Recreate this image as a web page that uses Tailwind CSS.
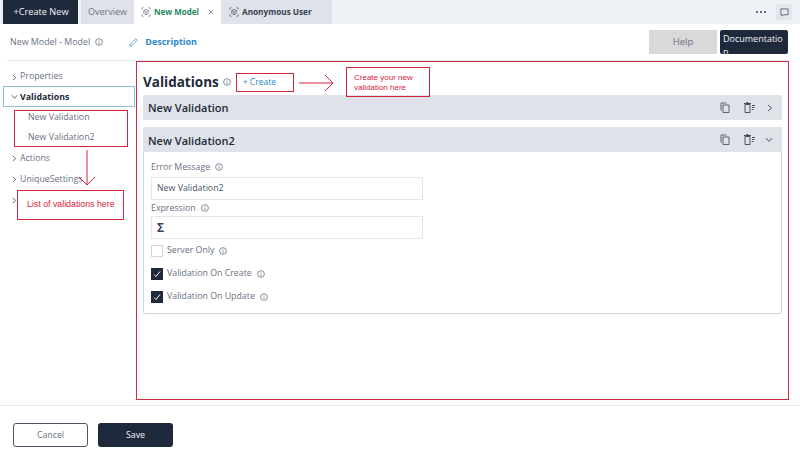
<!DOCTYPE html>
<html lang="en">
<head>
<meta charset="UTF-8">
<title>New Model</title>
<script src="https://cdn.jsdelivr.net/npm/@tailwindcss/browser@4"></script>
</head>
<body class="relative w-[800px] h-[463px] overflow-hidden bg-white font-['Open_Sans',sans-serif] text-[8.8px] text-gray-500">

<!-- tabs -->
<div class="flex h-6 bg-[#eef1f5] pl-[3px]">
  <div class="w-[75px] flex items-center justify-center pl-[1px] bg-[#1e293b] text-[9.2px] text-gray-100">+Create New</div>
  <div class="ml-[3px] w-[53px] flex items-center justify-center bg-[#dfe3e9] text-[9px] text-gray-500">Overview</div>
  <div class="w-[87px] flex items-center pl-[7px] bg-white">
    <svg class="w-[10px] h-[10px] text-gray-500 mr-[3px]" viewBox="0 0 12 12" fill="none" stroke="currentColor" stroke-width=".8"><path d="M1 3V1h2M9 1h2v2M11 9v2H9M3 11H1V9"/><circle cx="6" cy="6" r="3"/><path d="M3 4l3 2 3-2M6 6v3"/></svg>
    <span class="text-[8px] font-bold text-[#1f8a5f]">New Model</span>
    <svg class="w-[6px] h-[6px] ml-[9px] text-gray-500" viewBox="0 0 8 8" stroke="currentColor" stroke-width="1"><path d="M1 1l6 6M7 1L1 7"/></svg>
  </div>
  <div class="w-[111px] flex items-center pl-[8px] bg-[#dfe3e9]">
    <svg class="w-[10px] h-[10px] text-gray-600 mr-[3px]" viewBox="0 0 12 12" fill="none" stroke="currentColor" stroke-width=".8"><path d="M1 3V1h2M9 1h2v2M11 9v2H9M3 11H1V9"/><circle cx="6" cy="6" r="3"/><path d="M3 4l3 2 3-2M6 6v3"/></svg>
    <span class="text-[8.2px] font-bold text-gray-700">Anonymous User</span>
  </div>
  <div class="ml-auto flex items-center pr-[8px]">
    <div class="flex gap-[1.5px] mr-[10px]">
      <span class="w-[2.5px] h-[2.5px] rounded-full bg-gray-700"></span>
      <span class="w-[2.5px] h-[2.5px] rounded-full bg-gray-700"></span>
      <span class="w-[2.5px] h-[2.5px] rounded-full bg-gray-700"></span>
    </div>
    <div class="w-4 h-4 flex items-center justify-center bg-[#e2e6ec]">
      <svg class="w-[9px] h-[9px] text-gray-600" viewBox="0 0 10 10" fill="none" stroke="currentColor" stroke-width=".9"><path d="M1 1h8v6.500H3.500L2 9V7.500H1z"/></svg>
    </div>
  </div>
</div>

<!-- model header -->
<div class="flex items-center h-[37px] ml-[7px] mr-[12px] pl-[3px] border-b border-gray-200">
  <span class="text-[8.9px] text-gray-500">New Model - Model</span>
  <svg class="w-2 h-2 ml-[5px] text-gray-500" viewBox="0 0 10 10" fill="none" stroke="currentColor"><circle cx="5" cy="5" r="4.200"/><path d="M5 4.500v3M5 2.500v1"/></svg>
  <svg class="w-[9px] h-[9px] ml-[26px] text-[#2b88c8]" viewBox="0 0 10 10" fill="none" stroke="currentColor" stroke-width=".8"><path d="M1 9l.6-2.500L7.500 .800l1.700 1.700-5.900 5.900z"/></svg>
  <span class="ml-[7px] text-[9px] font-bold text-[#2b88c8]">Description</span>
  <div class="ml-auto w-[68px] h-6 flex items-center justify-center bg-[#d9d9d9] text-[9.5px] text-gray-500">Help</div>
  <div class="ml-[3px] w-[68px] h-6 overflow-hidden rounded-[2px] bg-[#1e293b] pl-[3px] pt-[2px] text-[9px] leading-[13px] break-all text-gray-100">Documentation</div>
</div>

<!-- content -->
<div class="flex h-[344px]">
  <div class="w-[136px] pl-[3px] pr-[1px] pt-[7px] shrink-0">
    <div class="flex items-center h-[18px] pl-[9px] text-gray-500"><svg class="w-[5px] h-[7px] mr-[3px] text-gray-600" viewBox="0 0 6 8" fill="none" stroke="currentColor"><path d="M1 1l3.500 3L1 7"/></svg>Properties</div>
    <div class="flex items-center h-[21px] pl-[7px] border border-[#8fbfdc] font-bold text-gray-800"><svg class="w-[7px] h-[6px] mr-[2px] text-gray-600" viewBox="0 0 8 6" fill="none" stroke="currentColor"><path d="M1 1l3 3.500L7 1"/></svg><span class="pt-[2px]">Validations</span></div>
    <div class="pl-[25px] pt-[1px] text-gray-500">
      <div class="h-5 flex items-center">New Validation</div>
      <div class="h-5 flex items-center">New Validation2</div>
    </div>
    <div class="flex items-center h-[21px] pl-[9px] text-gray-500"><svg class="w-[5px] h-[7px] mr-[3px] text-gray-600" viewBox="0 0 6 8" fill="none" stroke="currentColor"><path d="M1 1l3.500 3L1 7"/></svg>Actions</div>
    <div class="flex items-center h-[21px] pl-[9px] text-gray-500"><svg class="w-[5px] h-[7px] mr-[3px] text-gray-600" viewBox="0 0 6 8" fill="none" stroke="currentColor"><path d="M1 1l3.500 3L1 7"/></svg>UniqueSettings</div>
    <div class="flex items-center h-[21px] pl-[9px]"><svg class="w-[5px] h-[7px] text-gray-600" viewBox="0 0 6 8" fill="none" stroke="currentColor"><path d="M1 1l3.500 3L1 7"/></svg></div>
  </div>

  <div class="w-[653px] h-[339px] border border-[#c9303f] pl-[6px] pr-[6px] pt-[8px]">
    <div class="flex items-center h-[24px] mb-[1px]">
      <span class="text-[13.5px] font-bold text-gray-800">Validations</span>
      <svg class="w-2 h-2 ml-[4px] text-gray-500" viewBox="0 0 10 10" fill="none" stroke="currentColor"><circle cx="5" cy="5" r="4.200"/><path d="M5 4.500v3M5 2.500v1"/></svg>
      <span class="ml-[12px] text-[8.5px] text-[#2b88c8]">+ Create</span>
    </div>
    <div class="flex items-center h-[25px] rounded-[2px] bg-[#dfe3e9] pl-[5px] pr-[9px]">
      <span class="pt-[2px] text-[11px] font-semibold text-gray-800">New Validation</span>
      <svg class="ml-auto w-[10px] h-[11px] text-gray-600" viewBox="0 0 10 11" fill="none" stroke="currentColor" stroke-width=".9"><path d="M3 3h6v7.500H3zM1 8.500V1h5.500"/></svg>
      <svg class="ml-[13px] w-[13px] h-[11px] text-gray-700" viewBox="0 0 13 11" fill="none" stroke="currentColor" stroke-width=".9"><path d="M2 2.500h5v8H2zM1 1.500h7M3.500 .5h2M9 3.500h3M9 5.500h2.500M9 7.500h1.500"/></svg>
      <svg class="ml-[11px] w-[6px] h-[8px] text-gray-600" viewBox="0 0 6 8" fill="none" stroke="currentColor"><path d="M1 1l3.500 3L1 7"/></svg>
    </div>
    <div class="mt-[7px] h-[187px] rounded-[2px] border border-gray-300">
      <div class="flex items-center h-[25px] -mt-px -mx-px rounded-t-[2px] bg-[#dfe3e9] pl-[5px] pr-[9px]">
        <span class="pt-[3px] text-[11px] font-semibold text-gray-800">New Validation2</span>
        <svg class="ml-auto w-[10px] h-[11px] text-gray-600" viewBox="0 0 10 11" fill="none" stroke="currentColor" stroke-width=".9"><path d="M3 3h6v7.500H3zM1 8.500V1h5.500"/></svg>
        <svg class="ml-[13px] w-[13px] h-[11px] text-gray-700" viewBox="0 0 13 11" fill="none" stroke="currentColor" stroke-width=".9"><path d="M2 2.500h5v8H2zM1 1.500h7M3.500 .5h2M9 3.500h3M9 5.500h2.500M9 7.500h1.500"/></svg>
        <svg class="ml-[9px] w-[8px] h-[6px] text-gray-600" viewBox="0 0 8 6" fill="none" stroke="currentColor"><path d="M1 1l3 3.500L7 1"/></svg>
      </div>
      <div class="pl-[7px] pt-[7px]">
        <div class="flex items-center h-[16px] text-gray-500"><span class="pt-[2px]">Error Message</span><svg class="w-2 h-2 ml-[5px] text-gray-500" viewBox="0 0 10 10" fill="none" stroke="currentColor"><circle cx="5" cy="5" r="4.200"/><path d="M5 4.500v3M5 2.500v1"/></svg></div>
        <div class="mt-[2px] w-[272px] h-[23px] flex items-center pl-[5px] border border-gray-200 text-gray-600">New Validation2</div>
        <div class="flex items-center h-[16px] text-gray-500"><span class="pt-[2px]">Expression</span><svg class="w-2 h-2 ml-[5px] text-gray-500" viewBox="0 0 10 10" fill="none" stroke="currentColor"><circle cx="5" cy="5" r="4.200"/><path d="M5 4.500v3M5 2.500v1"/></svg></div>
        <div class="w-[272px] h-[23px] flex items-center pl-[5px] border border-gray-200 text-[12px] font-bold text-gray-700">Σ</div>
        <div class="flex items-center h-[23px] text-gray-500">
          <span class="w-3 h-3 mr-[4px] border border-gray-300"></span>Server Only<svg class="w-2 h-2 ml-[5px] text-gray-500" viewBox="0 0 10 10" fill="none" stroke="currentColor"><circle cx="5" cy="5" r="4.200"/><path d="M5 4.500v3M5 2.500v1"/></svg>
        </div>
        <div class="flex items-center h-[23px] text-gray-500">
          <span class="w-3 h-3 mr-[4px] flex items-center justify-center bg-[#1e293b]"><svg class="w-2 h-2 text-white" viewBox="0 0 8 8" fill="none" stroke="currentColor"><path d="M1 4.500l2 2L7 1.500"/></svg></span>Validation On Create<svg class="w-2 h-2 ml-[5px] text-gray-500" viewBox="0 0 10 10" fill="none" stroke="currentColor"><circle cx="5" cy="5" r="4.200"/><path d="M5 4.500v3M5 2.500v1"/></svg>
        </div>
        <div class="flex items-center h-[23px] text-gray-500">
          <span class="w-3 h-3 mr-[4px] flex items-center justify-center bg-[#1e293b]"><svg class="w-2 h-2 text-white" viewBox="0 0 8 8" fill="none" stroke="currentColor"><path d="M1 4.500l2 2L7 1.500"/></svg></span>Validation On Update<svg class="w-2 h-2 ml-[5px] text-gray-500" viewBox="0 0 10 10" fill="none" stroke="currentColor"><circle cx="5" cy="5" r="4.200"/><path d="M5 4.500v3M5 2.500v1"/></svg>
        </div>
      </div>
    </div>
  </div>
</div>

<!-- footer -->
<div class="flex items-start gap-[10px] h-[58px] pl-[13px] pt-[17px] border-t border-gray-200">
  <div class="w-[75px] h-[24px] flex items-center justify-center rounded-[3px] border border-gray-600 pt-[2px] text-gray-500">Cancel</div>
  <div class="w-[75px] h-[24px] flex items-center justify-center rounded-[3px] bg-[#1e293b] pt-[2px] text-gray-100">Save</div>
</div>

<!-- annotations over the page -->
<div class="absolute left-[236px] top-[73px] w-[58px] h-[19px] border border-[#d8243c]"></div>
<svg class="absolute left-[299px] top-[74px] w-[36px] h-[18px] text-[#d8243c]" viewBox="0 0 36 18" fill="none" stroke="currentColor"><path d="M0 9h34M26 1l8 8-8 8"/></svg>
<div class="absolute left-[346px] top-[67px] w-[84px] h-[30px] border border-[#d8243c] pl-[7px] pt-[5px] font-['Liberation_Sans',sans-serif] text-[8px] leading-[10px] text-[#d8243c]">Create your new<br>validation here</div>
<div class="absolute left-[14px] top-[110px] w-[114px] h-[37px] border border-[#d8243c]"></div>
<svg class="absolute left-[77px] top-[150px] w-[20px] h-[36px] text-[#d8243c]" viewBox="0 0 20 36" fill="none" stroke="currentColor"><path d="M10 0v35M2 27l8 8 8-8"/></svg>
<div class="absolute left-[17px] top-[190px] w-[107px] h-[30px] flex items-center pl-[9px] border border-[#d8243c] bg-white font-['Liberation_Sans',sans-serif] text-[8.8px] text-[#d8243c]">List of validations here</div>
</body>
</html>
